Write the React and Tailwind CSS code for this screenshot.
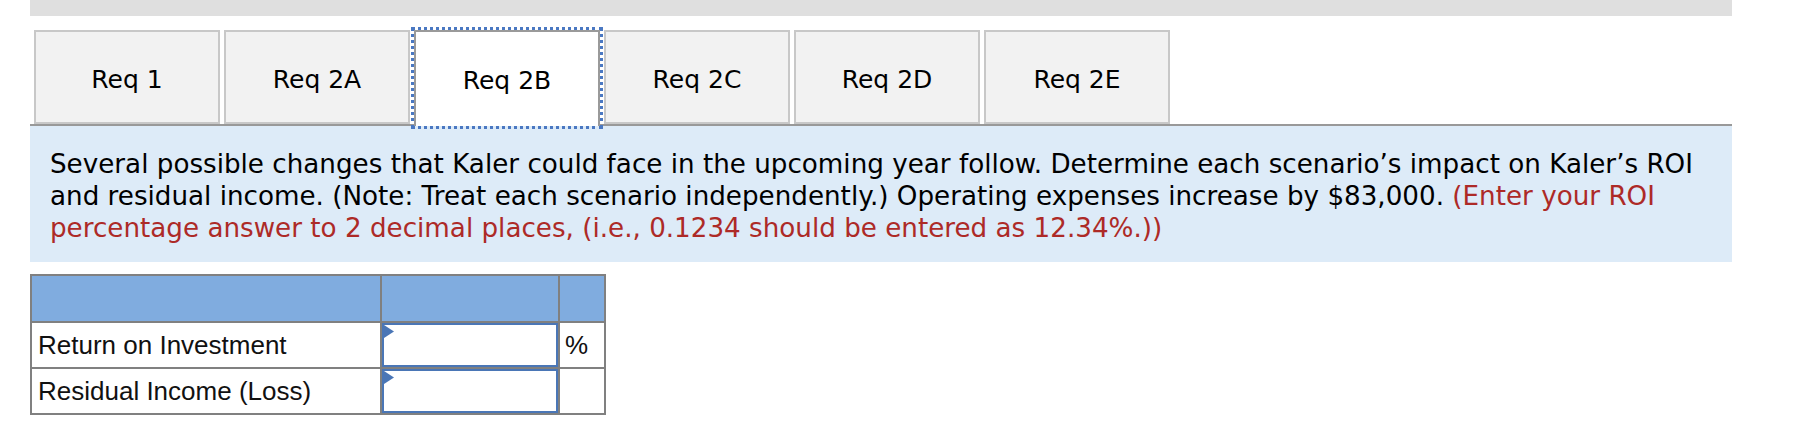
import React from 'react';

const tabs = ['Req 1', 'Req 2A', 'Req 2B', 'Req 2C', 'Req 2D', 'Req 2E'];
const active = 'Req 2B';

const tahoma = { fontFamily: '"DejaVu Sans", Verdana, sans-serif' };

function Tab({ label }) {
  if (label === active) {
    return (
      <button
        className="relative z-10 -mb-[2px] flex h-[96px] w-[186px] items-center justify-center border-2 border-b-0 border-[#9a9a9a] bg-white pt-[4px] text-[25px] text-black outline-[3px] outline-dotted outline-[#4a78c2]"
        style={tahoma}
      >
        {label}
      </button>
    );
  }
  return (
    <button
      className="flex h-[94px] w-[186px] items-center justify-center border-2 border-[#c8c8c8] bg-[#f2f2f2] pt-[6px] text-[25px] text-black"
      style={tahoma}
    >
      {label}
    </button>
  );
}

function AnswerInput() {
  return (
    <div className="relative h-[44px] w-full border-2 border-[#4a76b6] bg-white">
      <svg className="absolute left-0 top-0" width="10" height="13" viewBox="0 0 10 13">
        <path d="M0 0 L10 6.5 L0 13 Z" fill="#4a76b6" />
      </svg>
    </div>
  );
}

export default function App() {
  return (
    <div className="h-[430px] w-[1794px] bg-white">
      <div className="ml-[30px] h-[16px] w-[1702px] bg-[#dfdfdf]" />

      <div className="ml-[30px] mt-[14px] flex w-[1702px] items-end gap-[4px] border-b-2 border-[#999999] pl-[4px]">
        {tabs.map(t => <Tab key={t} label={t} />)}
      </div>

      <div
        className="ml-[30px] h-[136px] w-[1702px] bg-[#ddebf8] px-[20px] pt-[22px] text-[26.2px] leading-[32px] text-black"
        style={tahoma}
      >
        Several possible changes that Kaler could face in the upcoming year follow. Determine each scenario’s impact on Kaler’s ROI and residual income. (Note: Treat each scenario independently.) Operating expenses increase by $83,000.{' '}
        <span className="text-[#ad2a27]">(Enter your ROI percentage answer to 2 decimal places, (i.e., 0.1234 should be entered as 12.34%.))</span>
      </div>

      <table
        className="ml-[30px] mt-[12px] border-collapse border-2 border-[#808080] text-[26px] text-[#111]"
        style={{ fontFamily: '"Liberation Sans", Arial, sans-serif' }}
      >
        <thead>
          <tr className="h-[47px] bg-[#80acdf]">
            <th className="w-[350px] border-2 border-[#808080]" />
            <th className="w-[178px] border-2 border-[#808080]" />
            <th className="w-[46px] border-2 border-[#808080]" />
          </tr>
        </thead>
        <tbody>
          <tr className="h-[46px]">
            <td className="border-2 border-[#808080] pl-[6px] leading-none">Return on Investment</td>
            <td className="border-2 border-[#808080] p-0"><AnswerInput /></td>
            <td className="border-2 border-[#808080] pl-[5px] leading-none">%</td>
          </tr>
          <tr className="h-[46px]">
            <td className="border-2 border-[#808080] pl-[6px] leading-none">Residual Income (Loss)</td>
            <td className="border-2 border-[#808080] p-0"><AnswerInput /></td>
            <td className="border-2 border-[#808080]" />
          </tr>
        </tbody>
      </table>
    </div>
  );
}
